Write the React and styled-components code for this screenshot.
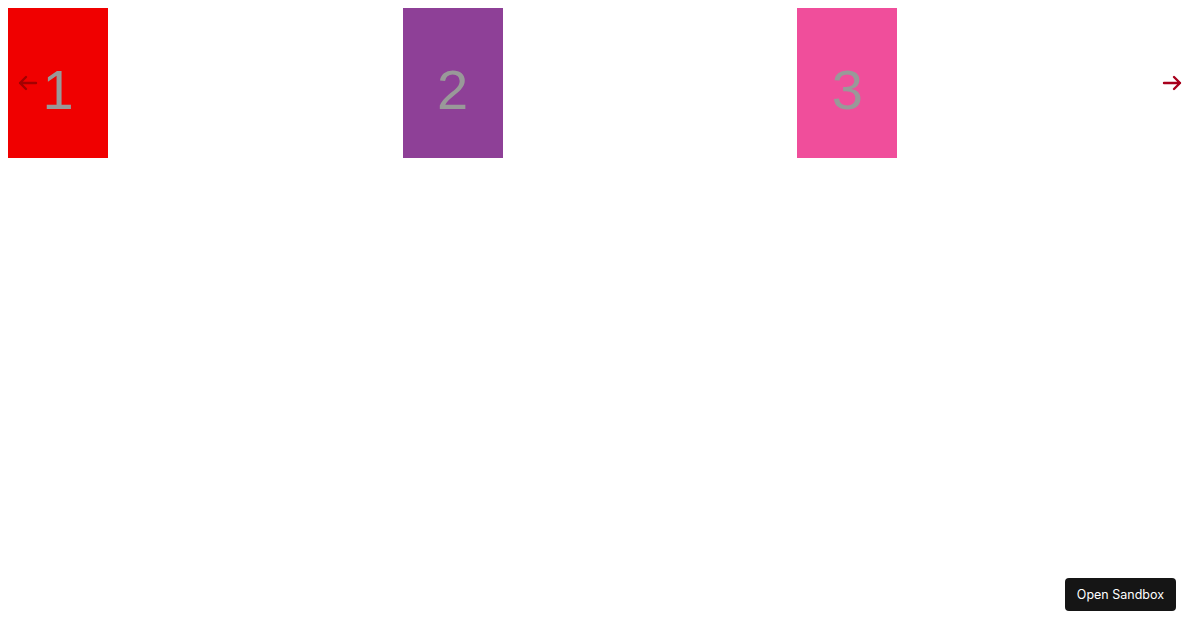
import React from 'react';
import styled, { createGlobalStyle } from 'styled-components';

const GlobalStyle = createGlobalStyle`
  body {
    margin: 8px;
    background: #fff;
    font-family: "Liberation Sans", Arial, sans-serif;
  }
`;

const Carousel = styled.div`
  position: relative;
  width: 100%;
`;

const Track = styled.div`
  display: grid;
  grid-template-columns: repeat(3, 1fr);
`;

const Slide = styled.div`
  display: flex;
`;

const Card = styled.div`
  width: 100px;
  height: 150px;
  background: ${({ $bg }) => $bg};
  color: #999;
  font-size: 56px;
  display: flex;
  justify-content: center;
  align-items: center;
  padding-top: 12px;
  box-sizing: border-box;
`;

const NavButton = styled.button`
  position: absolute;
  top: 67px;
  ${({ $side }) => ($side === 'left' ? 'left: 10px;' : 'right: 10px;')}
  width: 20px;
  height: 16px;
  padding: 0;
  border: 0;
  background: none;
  color: ${({ $dim }) => ($dim ? '#a30000' : '#a8001c')};
  display: flex;
  align-items: center;
  justify-content: center;
  cursor: pointer;
`;

const SandboxButton = styled.a`
  position: fixed;
  right: 24px;
  bottom: 19px;
  height: 33px;
  padding: 0 12px;
  display: flex;
  align-items: center;
  background: #151515;
  color: #fff;
  border-radius: 4px;
  font-family: Inter, "Liberation Sans", sans-serif;
  font-size: 12.5px;
  text-decoration: none;
`;

const Arrow = ({ left }) => (
  <svg
    width="20"
    height="16"
    viewBox="0 0 20 16"
    fill="none"
    stroke="currentColor"
    strokeWidth="2.4"
    strokeLinecap="round"
    strokeLinejoin="round"
    style={left ? { transform: 'scaleX(-1)' } : undefined}
  >
    <path d="M2 8h16M12 2l6 6-6 6" />
  </svg>
);

const slides = [
  { n: 1, bg: '#f00000' },
  { n: 2, bg: '#8e4097' },
  { n: 3, bg: '#f04e9b' },
];

export default function App() {
  return (
    <>
      <GlobalStyle />
      <Carousel>
        <Track>
          {slides.map((s) => (
            <Slide key={s.n}>
              <Card $bg={s.bg}>{s.n}</Card>
            </Slide>
          ))}
        </Track>
        <NavButton $side="left" $dim aria-label="Previous">
          <Arrow left />
        </NavButton>
        <NavButton $side="right" aria-label="Next">
          <Arrow />
        </NavButton>
      </Carousel>
      <SandboxButton href="#">Open Sandbox</SandboxButton>
    </>
  );
}
